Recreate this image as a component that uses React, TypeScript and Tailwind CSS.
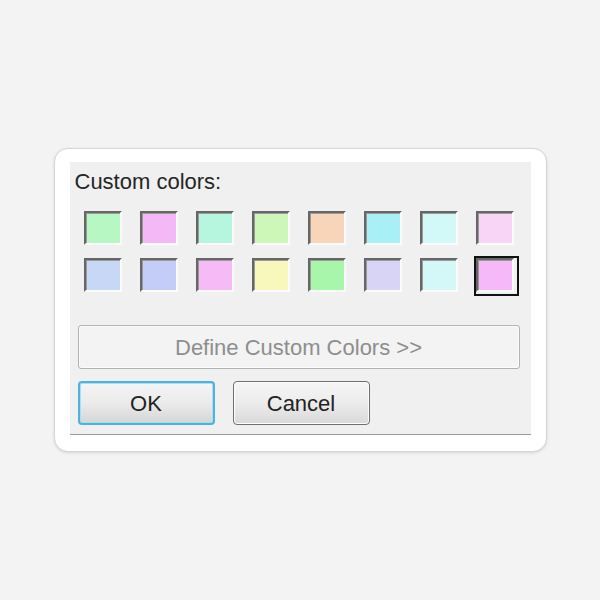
const ROWS = [
  ["#b6f7c4", "#f4b8f6", "#b6f5de", "#ccf7b8", "#f8d4b8", "#a8f0f6", "#d2f8f8", "#f8d4f6"],
  ["#c6d8f6", "#c4ccf8", "#f6baf6", "#f8f8bc", "#a8f6aa", "#d8d4f6", "#d4f8f8", "#f6b8f8"],
];

function Swatch({ color, selected }: { color: string; selected?: boolean }) {
  return (
    <div className="relative h-[34px] w-[38px]">
      <div
        style={{ background: color }}
        className="h-full w-full border-2 border-t-[#666] border-l-[#666] border-r-[#fbfbfb] border-b-[#fbfbfb] shadow-[inset_1px_1px_0_#9a9a9a]"
      />
      {selected && <div className="absolute -left-[2px] -top-[2px] h-[40px] w-[45px] border-2 border-[#111]" />}
    </div>
  );
}

export default function App() {
  return (
    <div
      className="flex h-[600px] w-[600px] items-center justify-center bg-[#f3f3f3]"
      style={{ fontFamily: '"Liberation Sans", Arial, sans-serif' }}
    >
      <div className="h-[304px] w-[493px] rounded-[14px] border border-[#d6d6d6] bg-white pb-[15px] pl-[15px] pr-[15px] pt-[13px] shadow-[0_1px_3px_rgba(0,0,0,0.12)]">
        <div className="flex h-[273px] w-[461px] flex-col border-b border-[#9a9a9a] bg-[#f0f0f0] pl-[8px] pt-[7px]">
          <div className="-ml-[3px] text-[22px] leading-[25px] text-[#262626]">Custom colors:</div>

          <div className="ml-[6px] mt-[17px] flex flex-col gap-[13px]">
            {ROWS.map((row, r) => (
              <div key={r} className="flex gap-[18px]">
                {row.map((c, i) => (
                  <Swatch key={i} color={c} selected={r === 1 && i === 7} />
                ))}
              </div>
            ))}
          </div>

          <div className="mt-[33px] flex h-[44px] w-[442px] items-center justify-center rounded-[3px] border border-[#b2b2b2] bg-[#f3f3f3] text-[22px] text-[#8e8e8e] shadow-[inset_0_0_0_1px_#fbfbfb]">
            Define Custom Colors &gt;&gt;
          </div>

          <div className="mt-[12px] flex gap-[18px]">
            <div className="flex h-[44px] w-[137px] items-center justify-center rounded-[4px] border-2 border-[#4fb2dc] bg-gradient-to-b from-[#f4f4f4] via-[#ebebeb] to-[#d6d6d6] text-[22px] text-[#222] shadow-[inset_0_0_0_1px_#a6e0f4]">
              OK
            </div>
            <div className="flex h-[44px] w-[137px] items-center justify-center rounded-[4px] border border-[#6e6e6e] bg-gradient-to-b from-[#f6f6f6] via-[#ececec] to-[#d9d9d9] text-[22px] text-[#222] shadow-[inset_0_0_0_1px_#fdfdfd]">
              Cancel
            </div>
          </div>
        </div>
      </div>
    </div>
  );
}
